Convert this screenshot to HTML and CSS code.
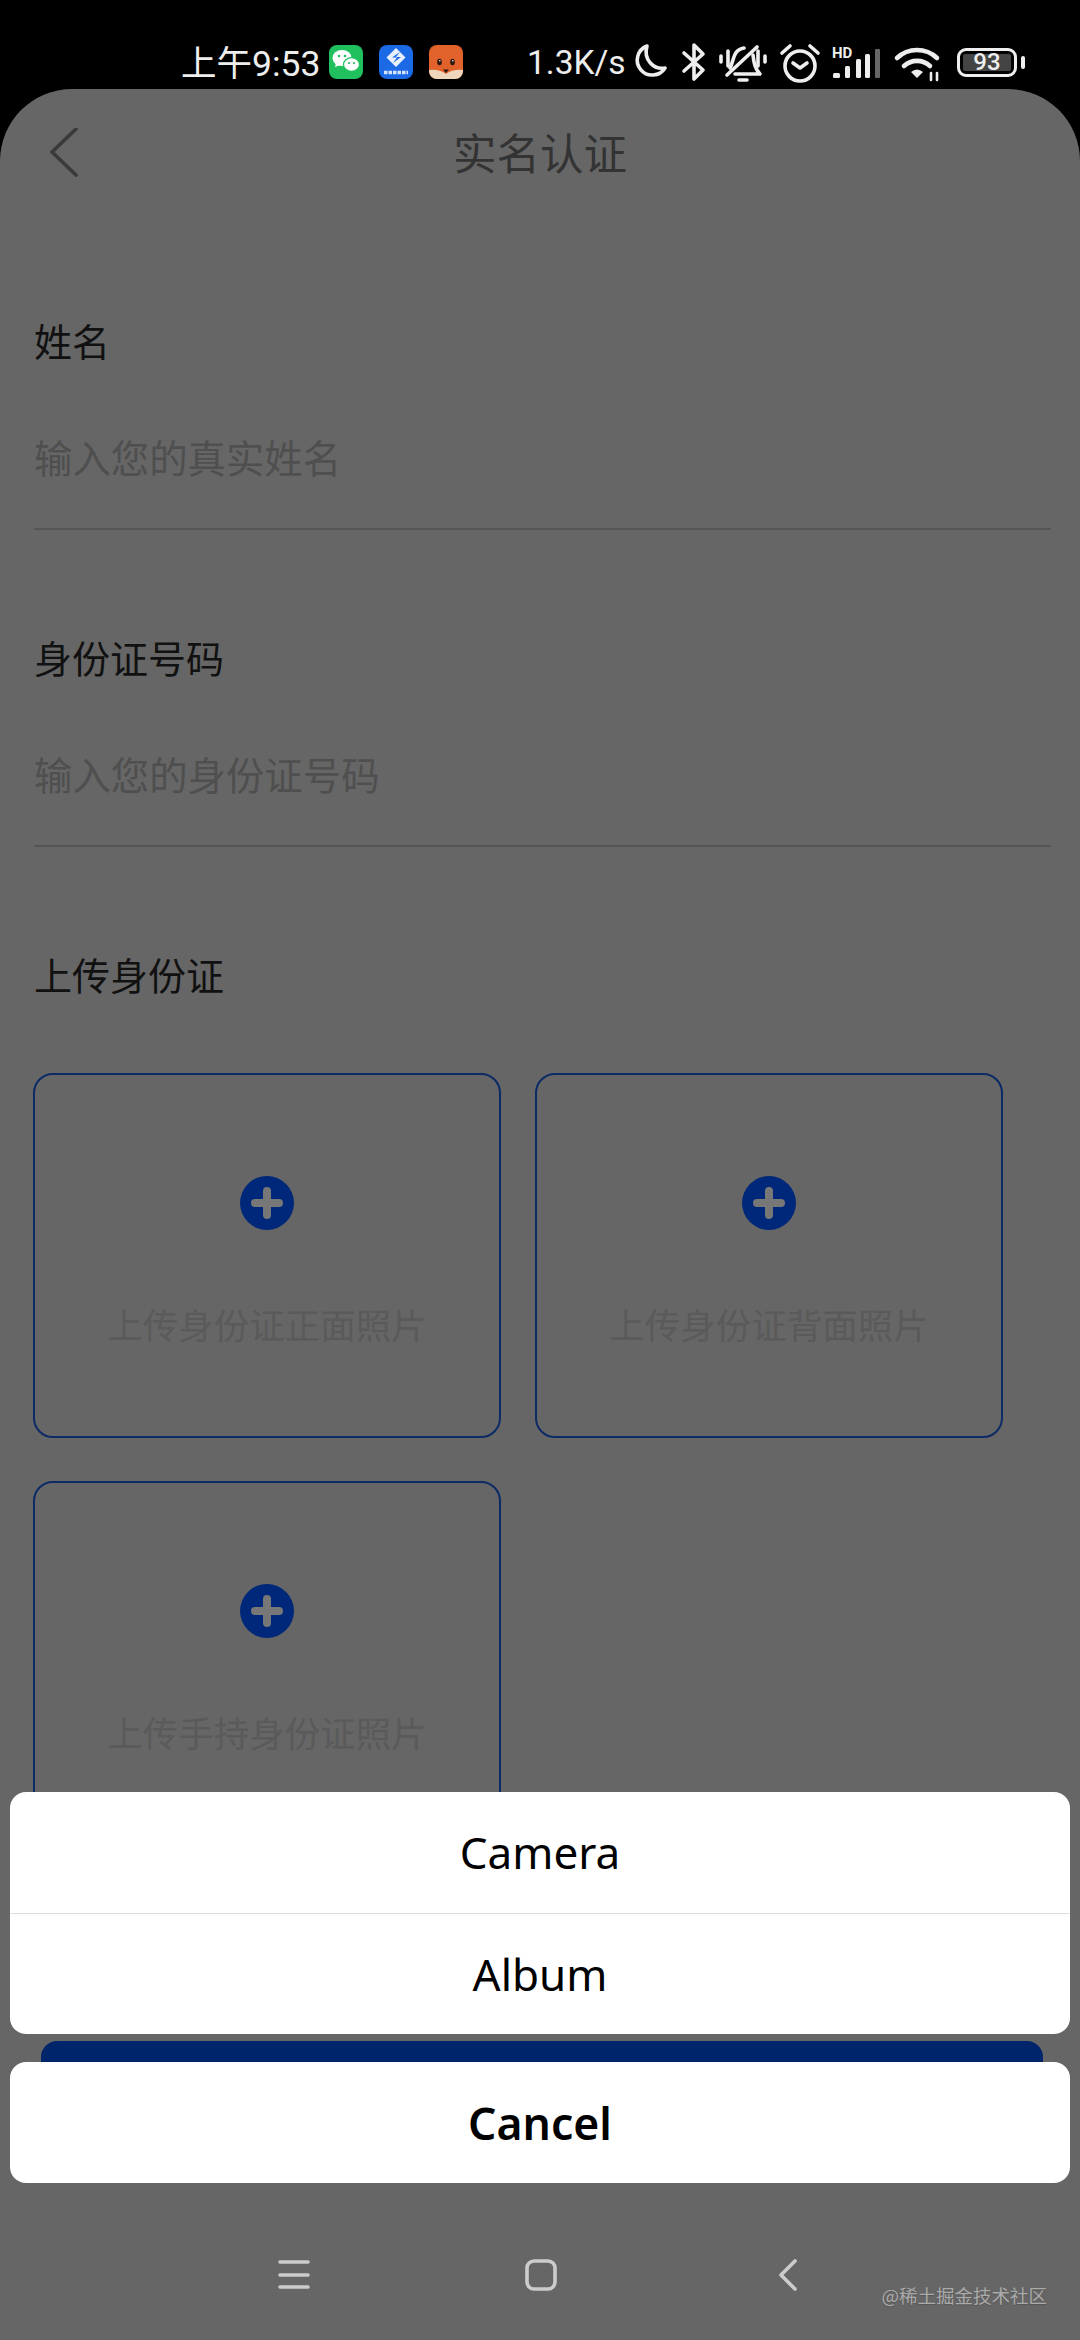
FILE: index.html
```html
<!DOCTYPE html>
<html lang="zh-CN">
<head>
    <meta charset="UTF-8">
    <meta name="viewport" content="width=device-width, initial-scale=1.0">
    <title>实名认证</title>
    <link rel="stylesheet" href="styles.css">
</head>
<body>
    <div class="status-bar">
        <span class="status-time">上午9:53</span>
        <div class="status-apps">
            <svg class="app-icon" viewBox="0 0 34 34">
                <rect width="34" height="34" rx="8" fill="#20c05f"/>
                <ellipse cx="13" cy="13" rx="9.5" ry="8" fill="#fff"/>
                <path d="M7 18l-1 4 5-2z" fill="#fff"/>
                <ellipse cx="22.5" cy="19.5" rx="8" ry="6.8" fill="#fff" stroke="#20c05f" stroke-width="1.2"/>
                <circle cx="10" cy="11" r="1.3" fill="#20c05f"/>
                <circle cx="16" cy="11" r="1.3" fill="#20c05f"/>
                <circle cx="20" cy="18" r="1.1" fill="#20c05f"/>
                <circle cx="25" cy="18" r="1.1" fill="#20c05f"/>
            </svg>
            <svg class="app-icon" viewBox="0 0 34 34">
                <rect width="34" height="34" rx="8" fill="#1c69e6"/>
                <path d="M17 3l9.5 9.5L17 22l-9.5-9.5z" fill="#e8f0fd"/>
                <path d="M21 7l-8 5.500h5l-4 5.500 8-6h-5z" fill="#1c69e6"/>
                <path d="M5 27.500h24" stroke="#d5e3fb" stroke-width="3.500" stroke-dasharray="3.500 1"/>
            </svg>
            <svg class="app-icon" viewBox="0 0 34 34">
                <defs><clipPath id="foxClip"><rect width="34" height="34" rx="8"/></clipPath></defs>
                <g clip-path="url(#foxClip)">
                    <rect width="34" height="34" fill="#e2622b"/>
                    <path d="M0 25q10-1 17 4q7-5 17-4v9H0z" fill="#eed7bd"/>
                    <ellipse cx="10.500" cy="17" rx="2.300" ry="3.200" fill="#2a1710"/>
                    <ellipse cx="23.500" cy="17" rx="2.300" ry="3.200" fill="#2a1710"/>
                    <circle cx="10.800" cy="15.800" r=".8" fill="#fff"/>
                    <circle cx="23.800" cy="15.800" r=".8" fill="#fff"/>
                    <path d="M14 24.500h6l-3 3.500z" fill="#2a1710"/>
                </g>
            </svg>
        </div>
        <span class="status-speed">1.3K/s</span>
        <div class="status-icons">
            <svg class="moon" viewBox="0 0 38 42"><path d="M15 5A15 15 0 1 0 33 27C22 29 11 19 15 5Z"/></svg>
            <svg class="bluetooth" viewBox="0 0 28 42"><path d="M4 12L23 29L14 38V4L23 13L4 30"/></svg>
            <svg class="bell" viewBox="0 0 50 42">
                <path d="M3 15v6M10 10v15M40 10v15M47 15v6"/>
                <path d="M9 34L39 6"/>
                <path d="M12 27C16 21 14 9 26 7M35 14C36 22 37 28 42 33H17"/>
                <path d="M21 39h8"/>
            </svg>
            <svg class="alarm" viewBox="0 0 42 42">
                <circle cx="22" cy="25" r="15"/>
                <path d="M4 12L12 5M32 5L40 12M15 22L22 27L29 22"/>
            </svg>
            <svg class="signal" viewBox="0 0 52 42">
                <text x="2" y="17" class="signal-hd">HD</text>
                <rect x="3" y="32" width="7" height="5" rx="1.500" fill="#eee"/>
                <rect x="15" y="25" width="5" height="12" rx="1.500" fill="#eee"/>
                <rect x="26" y="18" width="5" height="19" rx="1.500" fill="#eee"/>
                <rect x="35" y="13" width="5" height="24" rx="1.500" fill="#eee"/>
                <rect x="45" y="8" width="5" height="29" rx="1" fill="#666"/>
            </svg>
            <svg class="wifi" viewBox="0 0 50 42">
                <path d="M5 17A29 29 0 0 1 45 17M12 25A19 19 0 0 1 38 25"/>
                <path d="M19 31Q25 26 31 31L25 37Z" class="wifi-fill"/>
                <path d="M39 32v7M45 32v7" class="wifi-thin"/>
            </svg>
            <div class="battery"><span class="battery-level">93</span></div>
        </div>
    </div>

    <div class="page">
        <header class="page-header">
            <svg class="back-icon" viewBox="0 0 30 50"><path d="M26 1L2 24L26 47"/></svg>
            <h1>实名认证</h1>
        </header>

        <form class="form">
            <div class="field">
                <label class="field-label">姓名</label>
                <div class="field-input">输入您的真实姓名</div>
            </div>
            <div class="field">
                <label class="field-label">身份证号码</label>
                <div class="field-input">输入您的身份证号码</div>
            </div>
            <label class="field-label">上传身份证</label>
            <div class="upload-grid">
                <div class="upload-card">
                    <svg class="plus-icon" viewBox="0 0 54 54"><circle cx="27" cy="27" r="27"/><path d="M27 15v24M15 27h24"/></svg>
                    <span>上传身份证正面照片</span>
                </div>
                <div class="upload-card">
                    <svg class="plus-icon" viewBox="0 0 54 54"><circle cx="27" cy="27" r="27"/><path d="M27 15v24M15 27h24"/></svg>
                    <span>上传身份证背面照片</span>
                </div>
                <div class="upload-card">
                    <svg class="plus-icon" viewBox="0 0 54 54"><circle cx="27" cy="27" r="27"/><path d="M27 15v24M15 27h24"/></svg>
                    <span>上传手持身份证照片</span>
                </div>
            </div>
            <div class="submit-btn"></div>
        </form>
    </div>

    <!-- action sheet lies over the dimmed page -->
    <div class="action-sheet">
        <div class="sheet-group">
            <div class="sheet-item">Camera</div>
            <div class="sheet-item">Album</div>
        </div>
        <div class="sheet-group">
            <div class="sheet-item sheet-cancel">Cancel</div>
        </div>
    </div>

    <div class="nav-bar">
        <svg viewBox="0 0 32 32"><path d="M2 3h28M2 16h28M2 28h28"/></svg>
        <svg viewBox="0 0 32 32"><rect x="2" y="2" width="28" height="28" rx="7"/></svg>
        <svg viewBox="0 0 32 32"><path d="M23 2L9 16L23 30"/></svg>
    </div>
    <div class="watermark">@稀土掘金技术社区</div>
</body>
</html>
```

FILE: styles.css
```css
* {
    box-sizing: border-box;
}

html, body {
    margin: 0;
    padding: 0;
}

body {
    position: relative;
    width: 1080px;
    height: 2340px;
    overflow: hidden;
    background-color: #000;
    font-family: "Noto Sans", "Noto Sans CJK SC", sans-serif;
}

/* status bar */
.status-bar {
    display: flex;
    align-items: center;
    height: 89px;
    padding: 35px 0 0 181px;
    color: #eee;
}

.status-time {
    width: 148px;
    margin-bottom: 4px;
    font-family: "Roboto", "Noto Sans CJK SC", sans-serif;
    font-size: 35.5px;
    white-space: nowrap;
}

.status-apps {
    display: flex;
    gap: 16px;
}

.app-icon {
    display: block;
    width: 34px;
    height: 34px;
}

.status-speed {
    width: 105px;
    margin-left: 64px;
    font-family: "Roboto", sans-serif;
    font-size: 33.5px;
    white-space: nowrap;
}

.status-icons {
    display: flex;
    align-items: center;
    gap: 10px;
}

.status-icons svg {
    display: block;
    height: 42px;
    overflow: visible;
    fill: none;
    stroke: #eee;
    stroke-width: 3.6;
    stroke-linecap: round;
    stroke-linejoin: round;
}

.moon {
    width: 38px;
}

.bluetooth {
    width: 28px;
}

.bell {
    width: 50px;
}

.alarm {
    width: 42px;
}

.status-icons .signal {
    width: 52px;
    stroke: none;
}

.signal-hd {
    font-family: "Roboto", sans-serif;
    font-size: 15px;
    font-weight: 700;
    fill: #eee;
}

.wifi {
    width: 50px;
}

.wifi path {
    stroke-width: 4.6;
}

.wifi .wifi-fill {
    fill: #eee;
    stroke: none;
}

.wifi .wifi-thin {
    stroke-width: 2.6;
}

.battery {
    position: relative;
    display: flex;
    width: 60px;
    height: 29px;
    margin-left: 5px;
    padding: 3px;
    border: 3px solid #eee;
    border-radius: 9px;
}

.battery::after {
    content: "";
    position: absolute;
    top: 5px;
    right: -11px;
    width: 4px;
    height: 13px;
    border-radius: 2px;
    background-color: #eee;
}

.battery-level {
    flex: 1;
    border-radius: 2px;
    background-color: #444;
    color: #eee;
    font-family: "Roboto", sans-serif;
    font-size: 24px;
    font-weight: 500;
    line-height: 17px;
    text-align: center;
}

/* page behind the sheet */
.page {
    height: 2251px;
    overflow: hidden;
    background-color: #666;
    border-radius: 72px 72px 0 0;
}

.page-header {
    display: grid;
    grid-template-columns: 1fr auto 1fr;
    align-items: center;
    height: 128px;
    padding: 0 50px;
}

.back-icon {
    display: block;
    width: 30px;
    height: 50px;
    fill: none;
    stroke: #3a3a3a;
    stroke-width: 3.6;
    stroke-linecap: round;
}

.page-header h1 {
    margin: 0;
    color: #333;
    font-size: 43.5px;
    font-weight: 400;
    line-height: 60px;
}

.form {
    padding: 99px 29px 0 34px;
}

.field {
    margin-bottom: 103px;
}

.field-label {
    display: block;
    color: #111;
    font-size: 38px;
    line-height: 50px;
}

.field-input {
    padding: 67px 0 45px;
    border-bottom: 2px solid #555;
    color: #4f4f4f;
    font-size: 38.4px;
    line-height: 50px;
}

.upload-grid {
    display: grid;
    grid-template-columns: 468px 468px;
    gap: 43px 34px;
    margin: 73px 0 0 -1px;
}

.upload-card {
    display: flex;
    flex-direction: column;
    align-items: center;
    height: 365px;
    padding-top: 101px;
    border: 2px solid #0c2a66;
    border-radius: 20px;
    color: #5a5a5a;
    font-size: 35.5px;
    line-height: 50px;
}

.plus-icon {
    display: block;
    width: 54px;
    height: 54px;
    margin-bottom: 70px;
    fill: #00287a;
    stroke: none;
}

.plus-icon path {
    fill: none;
    stroke: #777;
    stroke-width: 8;
    stroke-linecap: round;
}

.submit-btn {
    height: 120px;
    margin: 195px 8px 0 7px;
    border-radius: 16px;
    background-color: #00256a;
}

/* overlays */
.action-sheet {
    position: absolute;
    left: 10px;
    right: 10px;
    bottom: 157px;
    display: flex;
    flex-direction: column;
    gap: 28px;
}

.sheet-group {
    overflow: hidden;
    border-radius: 16px;
    background-color: #fff;
}

.sheet-item {
    height: 121px;
    color: #000;
    font-size: 44px;
    line-height: 121px;
    text-align: center;
}

.sheet-item + .sheet-item {
    border-top: 1px solid #ddd;
}

.sheet-cancel {
    font-size: 44.5px;
    font-weight: 600;
}

.nav-bar {
    position: absolute;
    left: 278px;
    bottom: 49px;
    display: flex;
    gap: 215px;
}

.nav-bar svg {
    display: block;
    width: 32px;
    height: 32px;
    fill: none;
    stroke: #ccc;
    stroke-width: 3.6;
    stroke-linecap: round;
    stroke-linejoin: round;
}

.watermark {
    position: absolute;
    right: 33px;
    bottom: 31px;
    color: #aaa;
    font-family: "Noto Sans CJK SC", sans-serif;
    font-size: 18.5px;
    line-height: 28px;
    text-shadow: 0 1px 1px #555;
}
```
